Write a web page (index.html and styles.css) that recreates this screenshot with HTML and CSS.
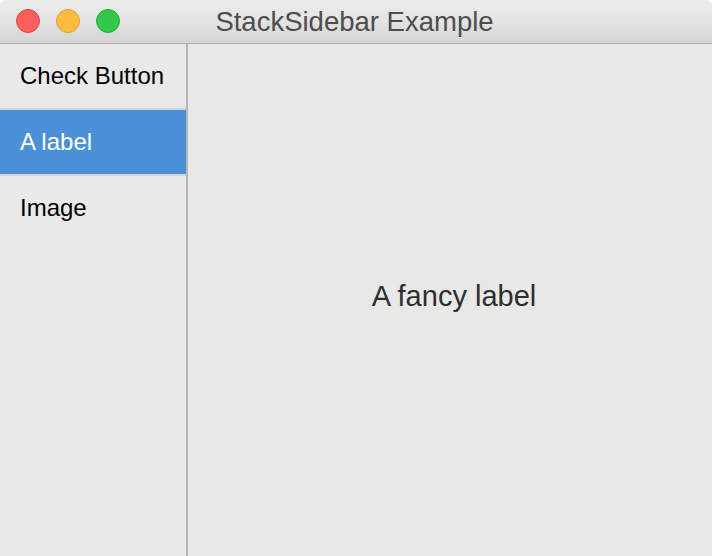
FILE: index.html
```html
<!DOCTYPE html>
<html>
<head>
<meta charset="utf-8">
<link rel="stylesheet" href="styles.css">
</head>
<body>
<div class="window">
  <header class="titlebar">
    <div class="lights">
      <span class="light close"></span>
      <span class="light minimize"></span>
      <span class="light zoom"></span>
    </div>
    <div class="title">StackSidebar Example</div>
  </header>
  <div class="main">
    <nav class="sidebar">
      <div class="row">Check Button</div>
      <div class="row selected">A label</div>
      <div class="row">Image</div>
    </nav>
    <section class="content">
      <div class="fancy">A fancy label</div>
    </section>
  </div>
</div>
</body>
</html>
```

FILE: styles.css
```css
html, body {
  margin: 0;
  padding: 0;
  background: #ffffff;
}
body {
  width: 712px;
  height: 556px;
  overflow: hidden;
  font-family: "Liberation Sans", Arial, sans-serif;
}
.window {
  width: 712px;
  height: 556px;
  display: flex;
  flex-direction: column;
  border-radius: 6px 6px 0 0;
  overflow: hidden;
  background: #e8e8e7;
}
.titlebar {
  position: relative;
  height: 43px;
  flex: none;
  background: linear-gradient(to bottom, #ececec 0%, #e3e3e3 50%, #d4d4d4 100%);
  border-bottom: 1px solid #b3b3b3;
  display: flex;
  align-items: center;
  justify-content: center;
}
.lights {
  position: absolute;
  left: 16px;
  top: 9px;
  display: flex;
  gap: 16px;
}
.light {
  width: 22px;
  height: 22px;
  border-radius: 50%;
  border: 1px solid transparent;
}
.close { background: #fc605c; border-color: #e0453f; }
.minimize { background: #fdbc40; border-color: #dea036; }
.zoom { background: #34c84a; border-color: #29ab36; }
.title {
  font-size: 27.5px;
  color: #4d4d4d;
  line-height: 43px;
  margin-left: -3px;
}
.main {
  flex: 1;
  display: flex;
  min-height: 0;
}
.sidebar {
  width: 186px;
  flex: none;
  background: #e9e9e9;
  border-right: 2px solid #b6b6b6;
  display: flex;
  flex-direction: column;
}
.row {
  height: 64px;
  display: flex;
  align-items: center;
  padding-left: 20px;
  font-size: 24px;
  color: #000000;
}
.row + .row {
  border-top: 2px solid #d4d4d4;
}
.row.selected {
  background: #4a90d9;
  color: #ffffff;
}
.content {
  flex: 1;
  display: flex;
  align-items: center;
  justify-content: center;
  background: #e8e8e7;
}
.fancy {
  font-size: 29px;
  color: #2e2e2e;
  margin-left: 8px;
  margin-top: -8px;
}
```
